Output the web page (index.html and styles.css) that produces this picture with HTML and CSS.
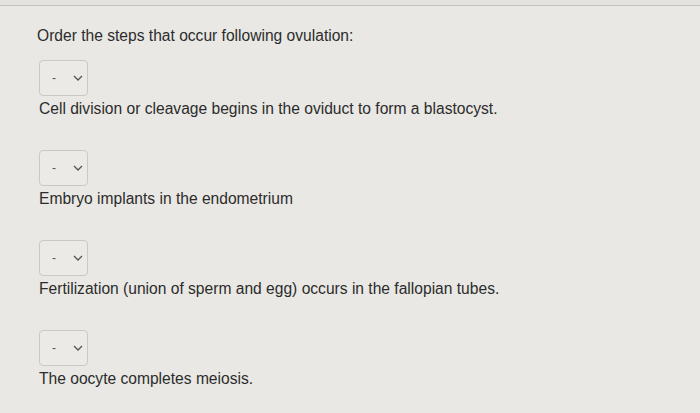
FILE: index.html
```html
<!DOCTYPE html>
<html>
<head>
<meta charset="utf-8">
<link rel="stylesheet" href="styles.css">
</head>
<body>
<div class="topbar"></div>
<div class="question">
  <p class="prompt">Order the steps that occur following ovulation:</p>
  <div class="item">
    <div class="select"><span class="dash">-</span><svg class="chev" viewBox="0 0 10 6" width="10" height="6"><path d="M1 1 L5 5 L9 1" fill="none" stroke="#555" stroke-width="1.3"/></svg></div>
    <div class="label">Cell division or cleavage begins in the oviduct to form a blastocyst.</div>
  </div>
  <div class="item">
    <div class="select"><span class="dash">-</span><svg class="chev" viewBox="0 0 10 6" width="10" height="6"><path d="M1 1 L5 5 L9 1" fill="none" stroke="#555" stroke-width="1.3"/></svg></div>
    <div class="label">Embryo implants in the endometrium</div>
  </div>
  <div class="item">
    <div class="select"><span class="dash">-</span><svg class="chev" viewBox="0 0 10 6" width="10" height="6"><path d="M1 1 L5 5 L9 1" fill="none" stroke="#555" stroke-width="1.3"/></svg></div>
    <div class="label">Fertilization (union of sperm and egg) occurs in the fallopian tubes.</div>
  </div>
  <div class="item">
    <div class="select"><span class="dash">-</span><svg class="chev" viewBox="0 0 10 6" width="10" height="6"><path d="M1 1 L5 5 L9 1" fill="none" stroke="#555" stroke-width="1.3"/></svg></div>
    <div class="label">The oocyte completes meiosis.</div>
  </div>
</div>
</body>
</html>
```
FILE: styles.css
```css
html, body {
  margin: 0;
  padding: 0;
  background: #e9e8e4;
  font-family: "Liberation Sans", Arial, sans-serif;
  color: #2c2c2c;
}
.topbar {
  height: 5px;
  border-bottom: 1px solid #c4c3bf;
  background: #e4e3df;
}
.question {
  padding: 0 0 0 39px;
}
.prompt {
  margin: 21px 0 0 -2px;
  font-size: 15.6px;
  line-height: 18px;
}
.item {
  margin-top: 15px;
}
.item + .item {
  margin-top: 31px;
}
.select {
  box-sizing: border-box;
  width: 49px;
  height: 36px;
  border: 1px solid #cac9c5;
  border-radius: 4px;
  background: #ebeae6;
  display: flex;
  align-items: center;
  padding-left: 12px;
  gap: 17px;
}
.dash {
  font-size: 12px;
  color: #555;
  line-height: 1;
}
.chev {
  display: block;
}
.label {
  margin-top: 3px;
  font-size: 15.6px;
  line-height: 20px;
}
```
